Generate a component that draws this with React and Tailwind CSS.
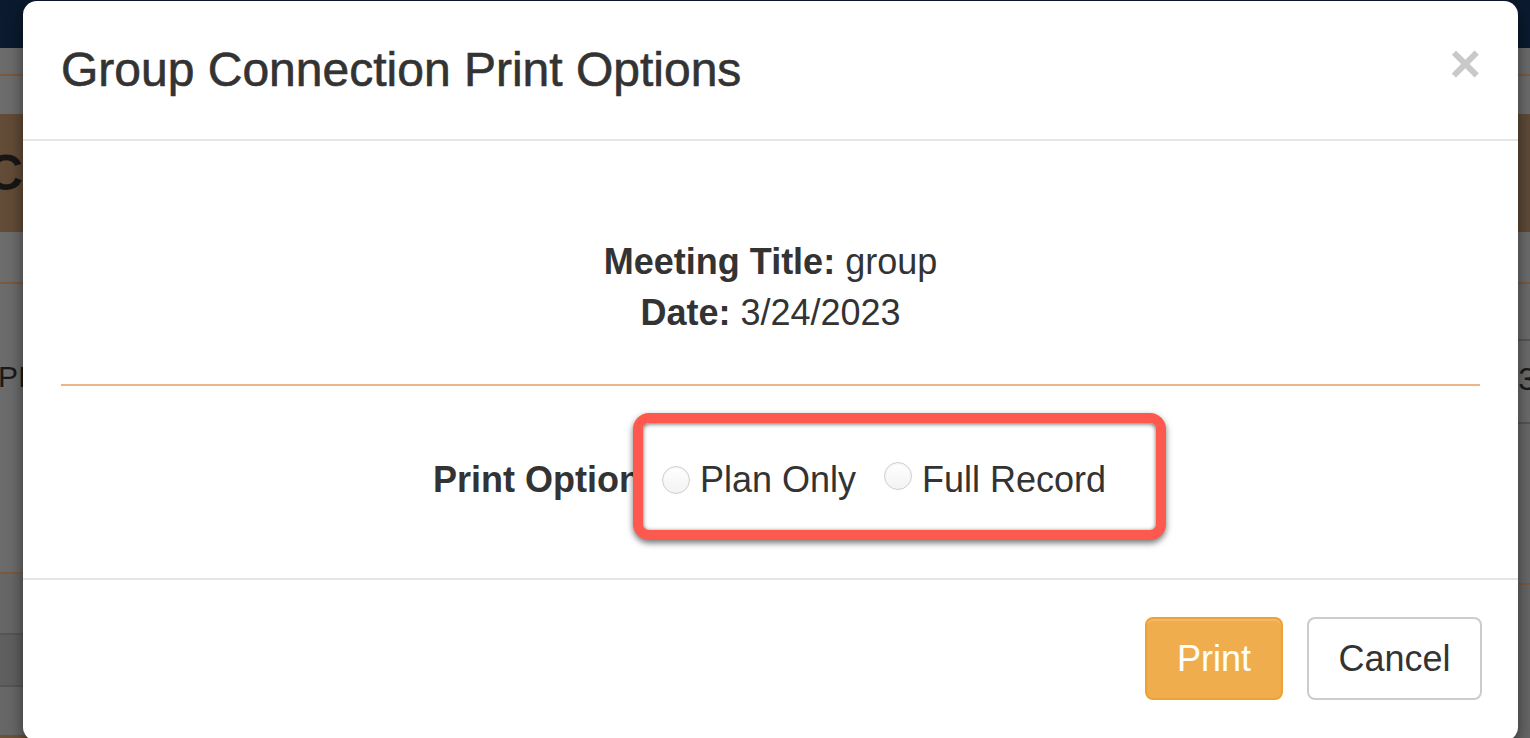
import React from 'react';

const font = { fontFamily: '"Liberation Sans", Arial, Helvetica, sans-serif' };

const Radio = () => (
  <span className="inline-block w-[28px] h-[28px] rounded-full border-[1.5px] border-[#cfcfcf] bg-gradient-to-b from-white to-[#f3f3f3] shadow-[inset_0_1px_2px_rgba(0,0,0,0.06)] shrink-0" />
);

const LeftBackdrop = () => (
  <div className="flex-1 flex flex-col">
    <div className="h-[48px] bg-[#0b1a2f]" />
    <div className="h-[26px] bg-[#6b6b6b]" />
    <div className="h-[2px] bg-[#7b5a3f]" />
    <div className="h-[38px] bg-[#6c6c6c]" />
    <div className="h-[118px] bg-[#624b37] flex items-center">
      <span className="-ml-[13px] text-[50px] font-bold leading-none text-[#161616]">C</span>
    </div>
    <div className="h-[50px] bg-[#6c6c6c]" />
    <div className="h-[2px] bg-[#7b5a3f]" />
    <div className="h-[288px] bg-[#6b6b6b] pt-[78px]">
      <span className="-ml-[2px] text-[30px] leading-none text-[#1a1a1a]">PI</span>
    </div>
    <div className="h-[2px] bg-[#7b5a3f]" />
    <div className="h-[59px] bg-[#666666]" />
    <div className="h-[2px] bg-[#555555]" />
    <div className="h-[50px] bg-[#5f5f5f]" />
    <div className="h-[2px] bg-[#555555]" />
    <div className="h-[48px] bg-[#676767]" />
    <div className="flex-1 bg-[#6b5038]" />
  </div>
);

const RightBackdrop = () => (
  <div className="flex-1 flex flex-col">
    <div className="h-[48px] bg-[#0b1a2f]" />
    <div className="h-[26px] bg-[#6b6b6b]" />
    <div className="h-[2px] bg-[#7b5a3f]" />
    <div className="h-[38px] bg-[#6c6c6c]" />
    <div className="h-[118px] bg-[#5e4a38]" />
    <div className="h-[50px] bg-[#6c6c6c]" />
    <div className="h-[2px] bg-[#7b5a3f]" />
    <div className="h-[55px] bg-[#6b6b6b]" />
    <div className="h-[2px] bg-[#555555]" />
    <div className="h-[81px] bg-[#6b6b6b] flex justify-end pt-[22px]">
      <span className="-mr-[6px] text-[32px] leading-none text-[#1a1a1a]">3</span>
    </div>
    <div className="h-[2px] bg-[#555555]" />
    <div className="h-[159px] bg-[#686868]" />
    <div className="h-[2px] bg-[#7b5a3f]" />
    <div className="flex-1 bg-[#666666]" />
  </div>
);

export default function App() {
  return (
    <div className="relative w-[1530px] h-[738px] overflow-hidden" style={font}>
      <div className="absolute inset-0 flex">
        <LeftBackdrop />
        <RightBackdrop />
      </div>

      {/* modal */}
      <div className="absolute left-[23px] top-[1px] w-[1495px] h-[740px] bg-white rounded-[14px] shadow-[0_5px_15px_rgba(0,0,0,0.5)] flex flex-col text-[#333333]">
        <div className="h-[140px] flex items-center justify-between px-[38px] border-b-2 border-[#e5e5e5]">
          <h4 className="text-[48px] leading-[1.1] font-medium [-webkit-text-stroke:0.6px_#333333]">Group Connection Print Options</h4>
          <span className="text-[54px] font-bold leading-none text-[#c9c9c9] -mt-[14px] -mr-[1px]">×</span>
        </div>

        <div className="h-[439px] px-[38px] pt-[95px] border-b-2 border-[#e5e5e5]">
          <div className="text-center text-[36px] leading-[51px]">
            <div><span className="font-bold">Meeting Title:</span> group</div>
            <div><span className="font-bold">Date:</span> 3/24/2023</div>
          </div>
          <div className="mt-[46px] h-[2px] bg-[#ebb683]" />
          <div className="mt-[27px] flex items-center pl-[372px]">
            <span className="text-[36px] font-bold leading-[51px] pt-[6px]">Print Option</span>
            <div className="-ml-[8px] h-[127px] w-[533px] border-[10px] border-[#fd594e] rounded-[16px] bg-white shadow-[0_3px_6px_rgba(0,0,0,0.55),inset_0_1px_4px_rgba(0,0,0,0.6)] flex items-center pl-[19px] pt-[6px]">
              <Radio />
              <span className="ml-[10px] text-[36px] leading-[51px]">Plan Only</span>
              <span className="ml-[28px]"><Radio /></span>
              <span className="ml-[10px] text-[36px] leading-[51px]">Full Record</span>
            </div>
          </div>
        </div>

        <div className="flex justify-end gap-[24px] px-[36px] pt-[37px]">
          <button className="h-[83px] w-[138px] rounded-[8px] border-2 border-[#eea236] bg-[#f0ad4e] text-white text-[36px] leading-none shadow-[inset_0_2px_0_rgba(255,255,255,0.15)]">
            Print
          </button>
          <button className="h-[83px] w-[175px] rounded-[8px] border-2 border-[#cccccc] bg-white text-[#333333] text-[36px] leading-none">
            Cancel
          </button>
        </div>
      </div>
    </div>
  );
}
